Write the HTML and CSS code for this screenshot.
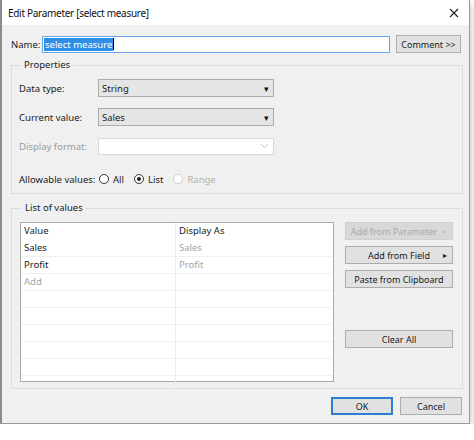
FILE: index.html
```html
<!DOCTYPE html>
<html lang="en">
<head>
    <meta charset="UTF-8">
    <title>Edit Parameter [select measure]</title>
    <link rel="stylesheet" href="styles.css">
</head>
<body>
    <div class="window">
        <div class="titlebar">
            <span class="title">Edit Parameter [select measure]</span>
            <svg class="close" width="10" height="10" viewBox="0 0 10 10"><path d="M1 1L9 9M9 1L1 9" stroke="#222" stroke-width="1.1" fill="none"/></svg>
        </div>
        <div class="dialog-body">
            <div class="name-row">
                <span class="name-label">Name:</span>
                <div class="name-input"><span class="selected">select measure</span><span class="caret"></span></div>
                <button class="button comment-btn">Comment &gt;&gt;</button>
            </div>

            <fieldset class="group props">
                <legend>Properties</legend>
                <div class="field">
                    <span class="field-label">Data type:</span>
                    <div class="select">String<span class="arrow">&#9662;</span></div>
                </div>
                <div class="field">
                    <span class="field-label">Current value:</span>
                    <div class="select">Sales<span class="arrow">&#9662;</span></div>
                </div>
                <div class="field disabled">
                    <span class="field-label">Display format:</span>
                    <div class="select empty">
                        <svg class="chevron" width="9" height="6" viewBox="0 0 9 6"><path d="M1 1L4.5 4.5L8 1" stroke="#c4c4c4" fill="none"/></svg>
                    </div>
                </div>
                <div class="field radios">
                    <span class="radios-label">Allowable values:</span>
                    <span class="radio"><span class="dot"></span>All</span>
                    <span class="radio checked"><span class="dot"></span>List</span>
                    <span class="radio off"><span class="dot"></span>Range</span>
                </div>
            </fieldset>

            <fieldset class="group values">
                <legend>List of values</legend>
                <div class="values-body">
                    <div class="values-table">
                        <div class="row head"><span>Value</span><span>Display As</span></div>
                        <div class="row"><span>Sales</span><span class="muted">Sales</span></div>
                        <div class="row"><span>Profit</span><span class="muted">Profit</span></div>
                        <div class="row"><span class="muted">Add</span><span></span></div>
                        <div class="row"><span></span><span></span></div>
                        <div class="row"><span></span><span></span></div>
                        <div class="row"><span></span><span></span></div>
                        <div class="row"><span></span><span></span></div>
                        <div class="row"><span></span><span></span></div>
                        <div class="row last"><span></span><span></span></div>
                    </div>
                    <div class="side-buttons">
                        <button class="button side disabled-btn">Add from Parameter<span class="sub">&#9656;</span></button>
                        <button class="button side">Add from Field<span class="sub">&#9656;</span></button>
                        <button class="button side">Paste from Clipboard</button>
                        <button class="button side clear-btn">Clear All</button>
                    </div>
                </div>
            </fieldset>

            <div class="footer">
                <button class="button ok-btn">OK</button>
                <button class="button">Cancel</button>
            </div>
        </div>
    </div>
</body>
</html>
```

FILE: styles.css
```css
* {
    box-sizing: border-box;
}
body {
    margin: 0;
    padding: 0;
    background-color: #fff;
    font-family: "Noto Sans", sans-serif;
    font-size: 9.5px;
    color: #1a1a1a;
}
.window {
    width: 470px;
    height: 424px;
    border: 1px solid #9a9a9a;
    border-left: 2px solid #8c8c8c;
    border-top: none;
    background-color: #f0f0f0;
    box-shadow: 0 4px 9px rgba(0, 0, 0, 0.28);
    display: flex;
    flex-direction: column;
}
.titlebar {
    height: 25px;
    background-color: #fff;
    display: flex;
    align-items: center;
    justify-content: space-between;
    padding: 0 8px 0 6px;
}
.titlebar .title {
    font-size: 10px;
    letter-spacing: -0.3px;
    color: #111;
}
.titlebar .close {
    margin-right: 2px;
}
.dialog-body {
    flex: 1;
    padding: 10px 6px 0 9px;
}
.name-row {
    display: flex;
    align-items: center;
    height: 18px;
}
.name-label {
    width: 31px;
}
.name-input {
    width: 348px;
    height: 17px;
    background-color: #fff;
    border: 1px solid #6aa7e6;
    display: flex;
    align-items: center;
    padding-left: 1px;
}
.name-input .selected {
    background-color: #2f8fe8;
    color: #fff;
    padding: 0 1px;
    line-height: 13px;
}
.name-input .caret {
    width: 1px;
    height: 12px;
    background-color: #000;
}
.button {
    font-family: "Noto Sans", sans-serif;
    font-size: 9px;
    color: #1a1a1a;
    background-color: #e1e1e1;
    border: 1px solid #adadad;
    padding: 0;
    height: 18px;
}
.comment-btn {
    width: 65px;
    margin-left: 6px;
}
.group {
    margin: 5px 0 0;
    border: 1px solid #dcdcdc;
    padding: 0;
}
.group legend {
    padding: 0 3px;
    margin-left: 2px;
    line-height: 14px;
}
.props {
    padding: 0 8px 5px 7px;
}
.field {
    display: flex;
    align-items: center;
    height: 18px;
    margin-top: 11px;
}
.props .field:first-of-type {
    margin-top: 7px;
}
.field-label {
    width: 79px;
}
.disabled .field-label {
    color: #9a9a9a;
}
.select {
    width: 176px;
    height: 18px;
    background-color: #e5e5e5;
    border: 1px solid #acacac;
    display: flex;
    align-items: center;
    justify-content: space-between;
    padding: 0 4px 0 3px;
}
.select .arrow {
    font-size: 9px;
    color: #111;
}
.select.empty {
    background-color: #fff;
    border-color: #d9d9d9;
    height: 17px;
    justify-content: flex-end;
}
.radios {
    margin-top: 15px;
}
.radios-label {
    width: 80px;
}
.radio {
    display: flex;
    align-items: center;
    margin-right: 10px;
}
.radio .dot {
    width: 10px;
    height: 10px;
    border-radius: 50%;
    border: 1px solid #333;
    background-color: #fff;
    margin-right: 4px;
    display: flex;
    align-items: center;
    justify-content: center;
}
.radio.checked .dot::after {
    content: '';
    width: 4px;
    height: 4px;
    border-radius: 50%;
    background-color: #222;
}
.radio.off {
    color: #b0b0b0;
}
.radio.off .dot {
    border-color: #d0d0d0;
}
.values {
    margin-top: 7px;
    padding: 0 8px 6px 8px;
}
.values-body {
    display: flex;
    margin-top: 7px;
}
.values-table {
    width: 314px;
    height: 160px;
    background-color: #fff;
    border: 1px solid #a9a9a9;
}
.row {
    display: grid;
    grid-template-columns: 155px 1fr;
    height: 17px;
    border-bottom: 1px solid #f0f0f0;
}
.row.head {
    border-bottom: none;
}
.row.last {
    border-bottom: none;
}
.row span {
    padding-left: 3px;
    line-height: 16px;
}
.row span:first-child {
    border-right: 1px solid #ececec;
}
.muted {
    color: #a4a4a4;
}
.side-buttons {
    display: flex;
    flex-direction: column;
    margin-left: 11px;
    width: 108px;
}
.side {
    width: 108px;
    margin-bottom: 6px;
    position: relative;
}
.side .sub {
    position: absolute;
    right: 5px;
    top: 2px;
    font-size: 8px;
}
.disabled-btn {
    color: #a8a8a8;
    background-color: #d8d8d8;
    border-color: #d0d0d0;
    padding-right: 10px;
}
.disabled-btn .sub {
    color: #c4c4c4;
}
.clear-btn {
    margin-top: 36px;
}
.footer {
    display: flex;
    justify-content: flex-end;
    margin-top: 8px;
    padding-right: 1px;
}
.footer .button {
    width: 62px;
    margin-left: 7px;
}
.ok-btn {
    border: 2px solid #2c7fd0;
}
```
